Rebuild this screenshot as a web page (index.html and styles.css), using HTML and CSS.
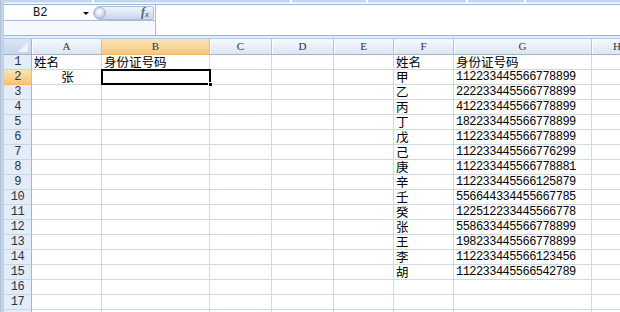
FILE: index.html
```html
<!DOCTYPE html>
<html lang="zh">
<head>
<meta charset="utf-8">
<title>Excel</title>
<link rel="stylesheet" href="styles.css">
</head>
<body>
<div class="app">
  <div class="frame-left"></div>
  <div class="main">
    <div class="ribbon-edge">
      <span class="seg s1"></span><span class="seg s2"></span><span class="seg s3"></span><span class="seg s4"></span><span class="seg s5"></span><span class="seg s6"></span>
    </div>
    <div class="formula-bar">
      <div class="fb-left">
        <div class="fb-top">
          <div class="name-box"><span class="name-text">B2</span><span class="drop"></span></div>
          <div class="fx-pill"><span class="knob"></span><span class="fx">f<sub>x</sub></span></div>
        </div>
        <div class="fb-bottom"></div>
      </div>
      <div class="fb-input"></div>
    </div>
    <div class="sep"></div>
    <div class="sheet">
      <div class="corner"><span class="tri"></span></div>
      <div class="ch">A</div><div class="ch sel">B</div><div class="ch">C</div><div class="ch">D</div><div class="ch">E</div><div class="ch">F</div><div class="ch">G</div><div class="ch last">H</div>

      <div class="rh">1</div><div class="c cjk">姓名</div><div class="c cjk">身份证号码</div><div class="c"></div><div class="c"></div><div class="c"></div><div class="c cjk">姓名</div><div class="c cjk">身份证号码</div><div class="c"></div>
      <div class="rh sel">2</div><div class="c cjk center">张</div><div class="c active"><span class="handle"></span></div><div class="c"></div><div class="c"></div><div class="c"></div><div class="c cjk">甲</div><div class="c num">112233445566778899</div><div class="c"></div>
      <div class="rh">3</div><div class="c"></div><div class="c"></div><div class="c"></div><div class="c"></div><div class="c"></div><div class="c cjk">乙</div><div class="c num">222233445566778899</div><div class="c"></div>
      <div class="rh">4</div><div class="c"></div><div class="c"></div><div class="c"></div><div class="c"></div><div class="c"></div><div class="c cjk">丙</div><div class="c num">412233445566778899</div><div class="c"></div>
      <div class="rh">5</div><div class="c"></div><div class="c"></div><div class="c"></div><div class="c"></div><div class="c"></div><div class="c cjk">丁</div><div class="c num">182233445566778899</div><div class="c"></div>
      <div class="rh">6</div><div class="c"></div><div class="c"></div><div class="c"></div><div class="c"></div><div class="c"></div><div class="c cjk">戊</div><div class="c num">112233445566778899</div><div class="c"></div>
      <div class="rh">7</div><div class="c"></div><div class="c"></div><div class="c"></div><div class="c"></div><div class="c"></div><div class="c cjk">己</div><div class="c num">112233445566776299</div><div class="c"></div>
      <div class="rh">8</div><div class="c"></div><div class="c"></div><div class="c"></div><div class="c"></div><div class="c"></div><div class="c cjk">庚</div><div class="c num">112233445566778881</div><div class="c"></div>
      <div class="rh">9</div><div class="c"></div><div class="c"></div><div class="c"></div><div class="c"></div><div class="c"></div><div class="c cjk">辛</div><div class="c num">112233445566125879</div><div class="c"></div>
      <div class="rh">10</div><div class="c"></div><div class="c"></div><div class="c"></div><div class="c"></div><div class="c"></div><div class="c cjk">壬</div><div class="c num">556644334455667785</div><div class="c"></div>
      <div class="rh">11</div><div class="c"></div><div class="c"></div><div class="c"></div><div class="c"></div><div class="c"></div><div class="c cjk">癸</div><div class="c num">122512233445566778</div><div class="c"></div>
      <div class="rh">12</div><div class="c"></div><div class="c"></div><div class="c"></div><div class="c"></div><div class="c"></div><div class="c cjk">张</div><div class="c num">558633445566778899</div><div class="c"></div>
      <div class="rh">13</div><div class="c"></div><div class="c"></div><div class="c"></div><div class="c"></div><div class="c"></div><div class="c cjk">王</div><div class="c num">198233445566778899</div><div class="c"></div>
      <div class="rh">14</div><div class="c"></div><div class="c"></div><div class="c"></div><div class="c"></div><div class="c"></div><div class="c cjk">李</div><div class="c num">112233445566123456</div><div class="c"></div>
      <div class="rh">15</div><div class="c"></div><div class="c"></div><div class="c"></div><div class="c"></div><div class="c"></div><div class="c cjk">胡</div><div class="c num">112233445566542789</div><div class="c"></div>
      <div class="rh">16</div><div class="c"></div><div class="c"></div><div class="c"></div><div class="c"></div><div class="c"></div><div class="c"></div><div class="c"></div><div class="c"></div>
      <div class="rh">17</div><div class="c"></div><div class="c"></div><div class="c"></div><div class="c"></div><div class="c"></div><div class="c"></div><div class="c"></div><div class="c"></div>
      <div class="rh"></div><div class="c"></div><div class="c"></div><div class="c"></div><div class="c"></div><div class="c"></div><div class="c"></div><div class="c"></div><div class="c"></div>
    </div>
  </div>
</div>
</body>
</html>
```

FILE: styles.css
```css
* { box-sizing: border-box; }
html, body { margin: 0; padding: 0; }
body {
  width: 620px;
  height: 312px;
  overflow: hidden;
  background: #ffffff;
  font-family: "Liberation Sans", sans-serif;
}
.app {
  display: flex;
  width: 620px;
  height: 312px;
}
.frame-left {
  width: 4px;
  flex: none;
  background: linear-gradient(to right, #aebfd6, #c9d7ea 60%, #b9cbe2);
}
.main {
  flex: 1;
  display: flex;
  flex-direction: column;
  min-width: 0;
  overflow: hidden;
}
.ribbon-edge {
  height: 5px;
  flex: none;
  display: flex;
  gap: 2px;
  background: #ffffff;
  border-bottom: 1px solid #9bb4d6;
}
.seg {
  height: 3px;
  background: #c4d6ec;
  border-bottom: 1px solid #dde8f5;
}
.s1 { width: 88px; }
.s2 { width: 196px; }
.s3 { width: 74px; }
.s4 { width: 98px; }
.s5 { width: 56px; }
.s6 { flex: 1; }

.formula-bar {
  height: 30px;
  flex: none;
  display: flex;
  background: #ffffff;
}
.fb-left {
  width: 152px;
  flex: none;
  display: flex;
  flex-direction: column;
  border-right: 1px solid #a7bcd8;
}
.fb-top {
  height: 16px;
  display: flex;
  align-items: center;
  border-bottom: 1px solid #a7bcd8;
}
.name-box {
  width: 89px;
  height: 15px;
  display: flex;
  align-items: center;
  position: relative;
}
.name-text {
  margin-left: 29px;
  font-family: "Liberation Mono", monospace;
  font-size: 12px;
  color: #111;
}
.drop {
  position: absolute;
  left: 79px;
  top: 7px;
  width: 0;
  height: 0;
  border-left: 3px solid transparent;
  border-right: 3px solid transparent;
  border-top: 3px solid #111;
}
.fx-pill {
  flex: 1;
  height: 14px;
  margin-right: 1px;
  display: flex;
  align-items: center;
  justify-content: space-between;
  border-radius: 7px 2px 2px 7px;
  background: linear-gradient(to bottom, #f1f5fb, #dbe5f3 50%, #c9d8ed);
  border: 1px solid #a9bedc;
}
.knob {
  width: 12px;
  height: 12px;
  border-radius: 50%;
  background: radial-gradient(circle at 40% 35%, #ffffff, #d4dbe5 55%, #9aa8ba);
  border: 1px solid #aab7c9;
}
.fx {
  margin-right: 4px;
  font-family: "Liberation Serif", serif;
  font-style: italic;
  font-weight: bold;
  font-size: 12px;
  color: #5a6070;
  line-height: 1;
}
.fx sub {
  font-size: 8px;
  vertical-align: -1px;
}
.fb-bottom {
  flex: 1;
  background: #f5f8fc;
}
.fb-input {
  flex: 1;
  background: #ffffff;
}
.sep {
  height: 4px;
  flex: none;
  border-top: 1px solid #9bb4d6;
  border-bottom: 1px solid #b4c8e2;
  background: #e6eef8;
}

.sheet {
  flex: 1;
  display: grid;
  grid-template-columns: 28px 70px 108px 62px 62px 60px 60px 138px 50px;
  grid-template-rows: 16px repeat(18, 15px);
  overflow: hidden;
}
.corner {
  position: relative;
  background: linear-gradient(to bottom, #dbe6f4, #c6d6ec);
  border-right: 1px solid #9eb6ce;
  border-bottom: 1px solid #9eb6ce;
}
.tri {
  position: absolute;
  right: 3px;
  bottom: 2px;
  width: 0;
  height: 0;
  border-left: 10px solid transparent;
  border-bottom: 10px solid #eef3fa;
}
.ch {
  background: linear-gradient(to bottom, #f7f9fc, #e9eef5 55%, #dde5ef);
  border-right: 1px solid #b1c4dc;
  border-bottom: 1px solid #9eb6ce;
  box-shadow: inset 1px 0 0 #ffffff;
  font-family: "Liberation Serif", serif;
  font-size: 11px;
  color: #27334a;
  text-align: center;
  line-height: 15px;
}
.ch.sel {
  background: linear-gradient(to bottom, #fce4b8, #f8d59a 55%, #f3c57c);
  border-right: 1px solid #f2b865;
  border-bottom: 1px solid #f2b865;
  box-shadow: none;
}
.ch.last {
  border-right: none;
}
.rh {
  background: #e4ecf7;
  border-right: 1px solid #9eb6ce;
  border-bottom: 1px solid #c5d5e8;
  font-family: "Liberation Mono", monospace;
  font-size: 12px;
  letter-spacing: -0.5px;
  color: #27334a;
  text-align: center;
  line-height: 15px;
}
.rh.sel {
  background: linear-gradient(to bottom, #fce3b4, #f8d294 55%, #f4c47b);
  border-bottom: 1px solid #f2b865;
  border-right: 1px solid #f2b865;
}
.c {
  border-right: 1px solid #d0d7e5;
  border-bottom: 1px solid #d0d7e5;
  padding-left: 2px;
  white-space: nowrap;
  color: #000;
}
.cjk {
  font-family: "Noto Sans CJK SC", sans-serif;
  font-size: 12.5px;
  line-height: 14px;
}
.num {
  font-family: "Liberation Mono", monospace;
  font-size: 12px;
  letter-spacing: -0.55px;
  line-height: 14px;
}
.center {
  text-align: center;
}
.active {
  position: relative;
  border: none;
}
.active::before {
  content: "";
  position: absolute;
  left: -1px;
  top: -1px;
  right: -1px;
  bottom: 0;
  border: 2px solid #000;
}
.handle {
  position: absolute;
  right: -3px;
  bottom: -2px;
  width: 5px;
  height: 5px;
  background: #000;
  border: 1px solid #fff;
}
```
